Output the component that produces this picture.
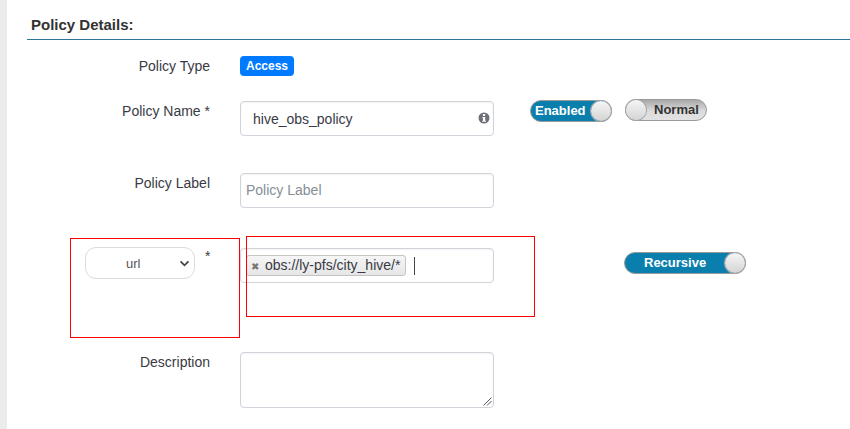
<div class="page">
  <main class="content">
    <h2 class="legend">Policy Details:</h2>

    <div class="row row-type">
      <div class="label">Policy Type</div>
      <div class="field"><span class="badge">Access</span></div>
    </div>

    <div class="row row-name">
      <div class="label">Policy Name *</div>
      <div class="field input name-input">
        <span>hive_obs_policy</span>
        <svg class="info" viewBox="0 0 12 12" width="12" height="12" aria-hidden="true">
          <circle cx="6" cy="6" r="5.5" fill="#6f6f78" />
          <rect x="4.9" y="2" width="2.2" height="2" fill="#fff" />
          <path d="M4.3 5h2.9v3.7h0.8v1H4.2v-1H5V6H4.3z" fill="#fff" />
        </svg>
      </div>
      <div class="toggle on enabled"><span class="t-text">Enabled</span><span class="knob"></span></div>
      <div class="toggle off normal"><span class="knob"></span><span class="t-text">Normal</span></div>
    </div>

    <div class="row row-label">
      <div class="label">Policy Label</div>
      <div class="field input placeholder">Policy Label</div>
    </div>

    <div class="row row-url">
      <div class="resource">
        <div class="select">
          <span>url</span>
          <svg viewBox="0 0 12 8" width="11" height="7" aria-hidden="true">
            <path d="M1.5 1.5 6 6l4.500-4.500" fill="none" stroke="#444" stroke-width="2" />
          </svg>
        </div>
        <span class="star">*</span>
      </div>
      <div class="field input tags">
        <span class="tag"><span class="x">✖</span>obs://ly-pfs/city_hive/*</span>
        <span class="caret"></span>
      </div>
      <div class="toggle on recursive"><span class="t-text">Recursive</span><span class="knob"></span></div>
    </div>

    <div class="row row-desc">
      <div class="label">Description</div>
      <div class="field input desc">
        <svg class="grip" viewBox="0 0 9 9" width="9" height="9" aria-hidden="true">
          <path d="M0.5 8.500 8.500 0.500M4 8.500 8.500 4" stroke="#555" stroke-width="1" fill="none" />
        </svg>
      </div>
    </div>
  </main>

  <div class="mark mark-a"></div>
  <div class="mark mark-b"></div>
</div>

<style>
  :global(body) { margin: 0; background: #fff; }
  .page {
    position: relative;
    width: 850px;
    height: 429px;
    overflow: hidden;
    box-sizing: border-box;
    border-left: 7px solid #ececec;
    font-family: "Liberation Sans", Arial, sans-serif;
    font-size: 14px;
    color: #3a3a44;
  }
  .content { padding-left: 20px; }
  .legend {
    margin: 0;
    height: 39px;
    box-sizing: content-box;
    border-bottom: 1px solid #2a7497;
    padding-left: 4px;
    font-size: 15px;
    font-weight: 700;
    line-height: 49px;
    color: #333;
  }
  .row { display: flex; align-items: flex-start; }
  .label {
    width: 183px;
    text-align: right;
    line-height: 20px;
    flex: none;
  }
  .field { margin-left: 30px; flex: none; }
  .row-type { margin-top: 16px; height: 20px; }
  .badge {
    display: block;
    width: 54px;
    height: 20px;
    border-radius: 4px;
    background: #007bff;
    color: #fff;
    font-size: 12px;
    font-weight: 700;
    line-height: 20px;
    text-align: center;
  }
  .row-name { margin-top: 25px; height: 35px; position: relative; }
  .input {
    box-sizing: border-box;
    width: 254px;
    height: 35px;
    border: 1px solid #ced4da;
    border-radius: 4px;
    background: #fff;
    padding: 0 12px;
    line-height: 33px;
    box-shadow: inset 0 1px 2px rgba(0, 0, 0, 0.05);
  }
  .name-input { display: flex; align-items: center; justify-content: space-between; padding: 1px 3px 0 12px; }
  .info { flex: none; margin-top: -2px; }

  .toggle {
    position: relative;
    box-sizing: border-box;
    height: 22px;
    border: 1px solid #9a9a9a;
    border-radius: 11px;
    display: flex;
    align-items: center;
    font-size: 13px;
    font-weight: 700;
    flex: none;
  }
  .t-text { margin-top: -2px; }
  .toggle.on { background: #0a7fae; color: #fff; }
  .toggle.off { background: linear-gradient(#a8a8a8, #dcdcdc 55%, #e2e2e2); color: #333; }
  .knob {
    width: 20px;
    height: 20px;
    border-radius: 50%;
    background: linear-gradient(#f6f6f6, #d4d4d4);
    box-shadow: 0 0 0 1px #a5a5a5;
    flex: none;
  }
  .toggle.on .knob { margin-left: auto; }
  .enabled { width: 82px; margin-left: 36px; margin-top: -1px; padding-left: 4px; }
  .normal { width: 82px; margin-left: 13px; margin-top: -2px; }
  .normal .t-text { margin-left: 8px; }
  .recursive { width: 122px; margin-left: 130px; margin-top: 4px; }
  .recursive .t-text { margin-left: 19px; }

  .row-label { margin-top: 37px; height: 35px; }
  .placeholder { color: #868e96; padding-left: 5px; }

  .row-url { margin-top: 40px; height: 35px; }
  .resource {
    width: 213px;
    flex: none;
    display: flex;
    align-items: flex-start;
    box-sizing: border-box;
    padding-left: 58px;
    margin-top: -1px;
    margin-right: -30px;
  }
  .select {
    box-sizing: border-box;
    width: 110px;
    height: 32px;
    border: 1px solid #dcdcdc;
    border-radius: 11px;
    display: flex;
    align-items: center;
    justify-content: flex-end;
    position: relative;
    padding-right: 4px;
    font-size: 13px;
    color: #555;
  }
  .select span { position: absolute; left: 40px; }
  .star { margin-left: 10px; line-height: 18px; }
  .tags {
    display: flex;
    align-items: center;
    padding: 0 0 0 5px;
    line-height: normal;
  }
  .tag {
    box-sizing: border-box;
    height: 21px;
    width: 160px;
    margin-top: -1px;
    border: 1px solid #c4c4c4;
    border-radius: 3px;
    background: linear-gradient(#f6f6f6, #e6e6e6);
    line-height: 18px;
    white-space: nowrap;
    font-size: 14px;
    padding-left: 4px;
  }
  .x { font-size: 10px; color: #777; margin-right: 6px; }
  .caret {
    width: 1px;
    height: 18px;
    background: #444;
    margin-left: 8px;
  }

  .row-desc { margin-top: 69px; height: 56px; }
  .desc { height: 56px; position: relative; }
  .grip { position: absolute; right: 1px; bottom: 1px; }

  .mark { position: absolute; border: 1px solid #f00; box-sizing: border-box; pointer-events: none; }
  .mark-a { left: 63px; top: 238px; width: 170px; height: 100px; }
  .mark-b { left: 239px; top: 236px; width: 289px; height: 81px; }
</style>
